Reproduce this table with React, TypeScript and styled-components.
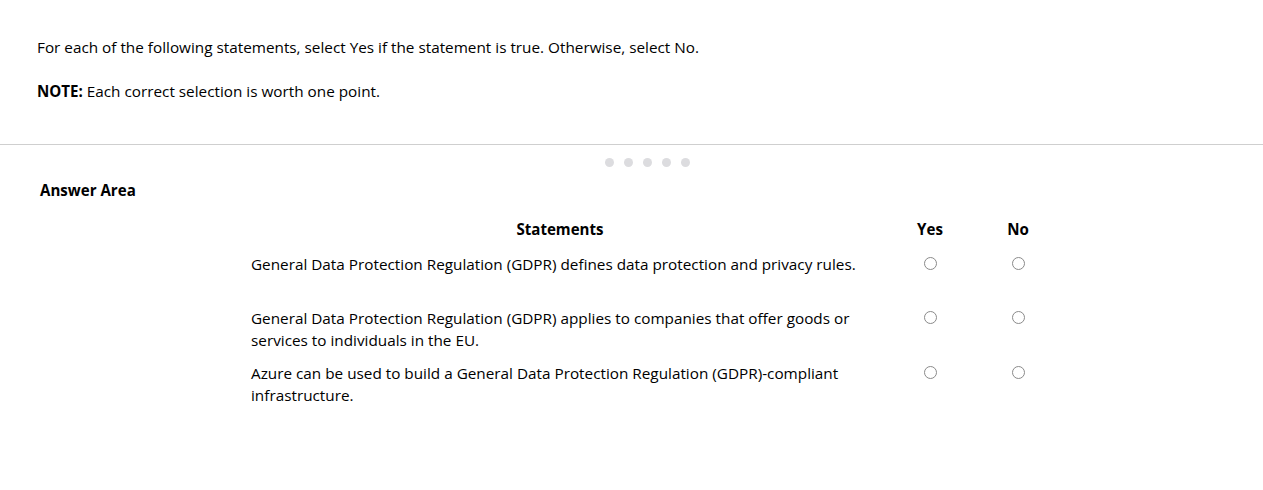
import React from "react";
import styled, { createGlobalStyle } from "styled-components";

const Global = createGlobalStyle`
  html, body { margin: 0; padding: 0; background: #fff; }
  body { font-family: "Open Sans", "Noto Sans", sans-serif; color: #000; }
`;

const Page = styled.div`
  width: 1263px;
  height: 490px;
  overflow: hidden;
  background: #fff;
`;

const Intro = styled.div`
  padding: 36px 0 0 37px;
  font-size: 15.3px;
  line-height: 22px;
`;

const Para = styled.p`
  margin: 0 0 22px;
  &:last-child { margin-bottom: 0; }
  b { font-size: 15.1px; }
`;

const Rule = styled.div`
  margin-top: 42px;
  height: 1px;
  background: #cfcfcf;
`;

const Dots = styled.div`
  display: flex;
  justify-content: center;
  gap: 10px;
  padding-top: 13px;
  padding-left: 31px;
`;

const Dot = styled.span`
  width: 9px;
  height: 9px;
  border-radius: 50%;
  background: #dcdcdf;
`;

const AnswerTitle = styled.div`
  margin: 12px 0 0 40px;
  font-size: 15.1px;
  line-height: 22px;
  font-weight: 700;
`;

const Table = styled.div`
  display: grid;
  grid-template-columns: 618px 122px 54px;
  margin: 17px 0 0 251px;
  font-size: 15.3px;
  line-height: 22px;
`;

const Head = styled.div`
  font-weight: 700;
  font-size: 15.1px;
  text-align: center;
  padding-bottom: 9px;
`;

const Cell = styled.div`
  padding: 4px 8px 7px 0;
  min-height: 43px;
`;

const RadioCell = styled.div`
  display: flex;
  justify-content: center;
  padding-top: 8px;
`;

const Radio = styled.span`
  box-sizing: border-box;
  width: 13px;
  height: 13px;
  border-radius: 50%;
  border: 1px solid #8a8a8a;
  background: #fff;
`;

const statements = [
  "General Data Protection Regulation (GDPR) defines data protection and privacy rules.",
  "General Data Protection Regulation (GDPR) applies to companies that offer goods or services to individuals in the EU.",
  "Azure can be used to build a General Data Protection Regulation (GDPR)-compliant infrastructure.",
];

export default function App() {
  return (
    <Page>
      <Global />
      <Intro>
        <Para>For each of the following statements, select Yes if the statement is true. Otherwise, select No.</Para>
        <Para>
          <b>NOTE:</b> Each correct selection is worth one point.
        </Para>
      </Intro>
      <Rule />
      <Dots>
        {[0, 1, 2, 3, 4].map((i) => (
          <Dot key={i} />
        ))}
      </Dots>
      <AnswerTitle>Answer Area</AnswerTitle>
      <Table>
        <Head>Statements</Head>
        <Head>Yes</Head>
        <Head>No</Head>
        {statements.map((s, i) => (
          <React.Fragment key={i}>
            <Cell>{s}</Cell>
            <RadioCell>
              <Radio />
            </RadioCell>
            <RadioCell>
              <Radio />
            </RadioCell>
          </React.Fragment>
        ))}
      </Table>
    </Page>
  );
}
